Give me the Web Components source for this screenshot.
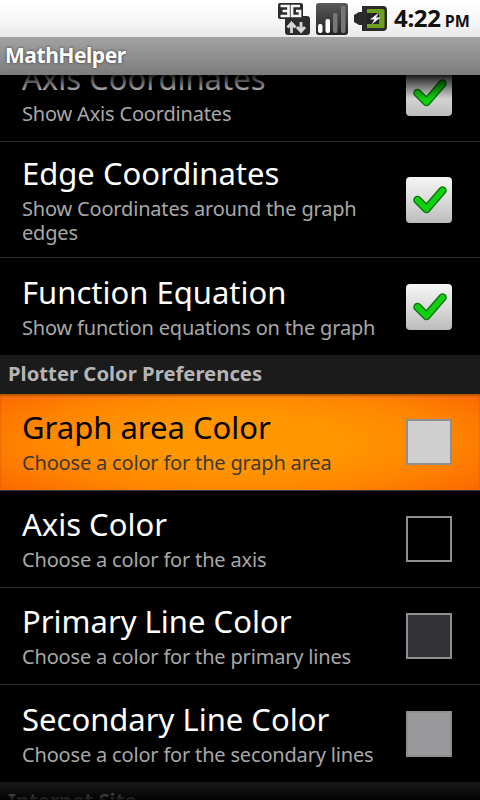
<!DOCTYPE html>
<html><head><meta charset="utf-8"><style>
html,body{margin:0;padding:0;background:#000;}
body{width:480px;height:800px;overflow:hidden;font-family:"Noto Sans","Open Sans",sans-serif;}
</style></head><body>
<phone-app>
<status-bar slot="status"></status-bar>
<title-bar slot="title">MathHelper</title-bar>
<pref-list slot="list">
<pref-row title="Axis Coordinates" sub="Show Axis Coordinates" check></pref-row>
<pref-row title="Edge Coordinates" sub="Show Coordinates around the graph edges" check tall></pref-row>
<pref-row title="Function Equation" sub="Show function equations on the graph" check last></pref-row>
<pref-section>Plotter Color Preferences</pref-section>
<pref-row title="Graph area Color" sub="Choose a color for the graph area" swatch="#cfcfcf" selected></pref-row>
<pref-row title="Axis Color" sub="Choose a color for the axis" swatch="#000"></pref-row>
<pref-row title="Primary Line Color" sub="Choose a color for the primary lines" swatch="#333236"></pref-row>
<pref-row title="Secondary Line Color" sub="Choose a color for the secondary lines" swatch="#99999b" last></pref-row>
<pref-section>Internet Site</pref-section>
</pref-list>
</phone-app>
<script>
function def(name,css,html,init){
  customElements.define(name,class extends HTMLElement{
    constructor(){super();const r=this.attachShadow({mode:"open"});r.innerHTML="<style>"+css+"</style>"+html;}
    connectedCallback(){if(init)init(this,this.shadowRoot);}
  });
}
def("phone-app",`:host{display:flex;flex-direction:column;width:480px;height:800px;overflow:hidden}
`,`<slot name="status"></slot><slot name="title"></slot><slot name="list"></slot>`);

def("status-bar",`:host{display:flex;align-items:center;height:37px;box-sizing:border-box;
background:linear-gradient(#fff 0,#f6f6f6 60%,#e8e8e8 100%);color:#111;padding-left:278px;flex:none}
svg{display:block;flex:none}
.s{margin-left:6px}.b{margin-left:6px}
.time{font:700 24px/30px "Noto Sans","Open Sans",sans-serif;letter-spacing:-.3px;margin-left:7px;margin-top:2px;white-space:nowrap}
.time small{font-size:16px;font-weight:700;margin-left:4px;letter-spacing:.2px}
`,`<svg class="n" width="32" height="32" viewBox="0 0 32 32">
<rect x="7" y="13" width="25" height="19" rx="3" fill="#2c2c2c"/>
<rect x="0" y="0" width="25" height="16" rx="2" fill="#2c2c2c"/>
<path d="M2.500 3h8v10h-8M4.500 8h6M22 3h-8v10h8V8h-4" fill="none" stroke="#f6f6f6" stroke-width="2.700"/>
<path d="M13.500 30v-9M9.500 24.500l4-4.500 4 4.500" fill="none" stroke="#d6d6d6" stroke-width="2.800"/>
<path d="M23 19v9M19 24l4 4.500 4-4.500" fill="none" stroke="#d6d6d6" stroke-width="2.800"/>
</svg>
<svg class="s" width="32" height="32" viewBox="0 0 32 32">
<defs><linearGradient id="sg" x1="0" y1="0" x2="0" y2="1"><stop offset="0" stop-color="#5a5a5a"/><stop offset="1" stop-color="#222"/></linearGradient></defs>
<rect width="32" height="32" rx="3" fill="url(#sg)"/>
<rect x="2" y="21" width="4.500" height="9" rx="2" fill="#fff"/>
<rect x="9.500" y="16" width="4.500" height="14" rx="2" fill="#fff"/>
<rect x="17" y="10" width="4.500" height="20" rx="2" fill="#777"/>
<rect x="25" y="3" width="4.500" height="27" rx="2" fill="#777"/>
</svg>
<svg class="b" width="33" height="25" viewBox="0 0 33 25">
<path d="M0 9l5-3h3V0h21a4 4 0 0 1 4 4v17a4 4 0 0 1-4 4H8v-6H5l-5-3z" fill="#2a2a2a"/>
<path d="M13 3h16a1.500 1.500 0 0 1 1.500 1.500v16a1.500 1.500 0 0 1-1.500 1.500H13z" fill="#6ea020"/>
<path d="M13 7h12v11H13z" fill="#222"/>
<path d="M25 6.500l-9 7h4.500l-3 5 9-7h-4.500z" fill="#fff"/>
</svg>
<span class="time">4:22<small>PM</small></span>`);

def("title-bar",`:host{display:block;height:38px;box-sizing:border-box;flex:none;background:linear-gradient(#a3a3a3,#7c7c7c);
color:#fff;font:700 21px/37px "Noto Sans","Open Sans",sans-serif;letter-spacing:-.45px;padding-left:5px;text-shadow:0 0 3px #333;position:relative;z-index:2}`,`<slot></slot>`);

def("pref-list",`:host{display:block;flex:1;min-height:0;overflow:hidden;position:relative;background:#000}
.in{margin-top:-30px}
.f{position:absolute;left:0;right:0;pointer-events:none}
.t{top:0;height:24px;background:linear-gradient(rgba(0,0,0,.9),rgba(0,0,0,0))}
.bt{bottom:0;height:20px;background:linear-gradient(rgba(0,0,0,0),rgba(0,0,0,.9))}
`,`<div class="in"><slot></slot></div><div class="f t"></div><div class="f bt"></div>`);

def("pref-section",`:host{display:block;height:39px;box-sizing:border-box;background:#1b1b1b;color:#b5b5b5;
font:700 20.300px/37px "Noto Sans","Open Sans",sans-serif;padding-left:8px;white-space:nowrap;overflow:hidden}`,`<slot></slot>`);

def("pref-row",`:host{display:flex;align-items:center;box-sizing:border-box;height:97px;padding:0 28px 0 22px;border-bottom:1px solid #2b2b2b;background:#000;gap:12px}
:host([tall]){height:116px}
:host([last]){border-bottom:0}
:host([selected]){background:radial-gradient(ellipse 62% 75% at 50% 50%,#ff9600 35%,#ff8500 70%,#fb6c00 100%);border-bottom:1px solid #3a3a3a;box-shadow:inset 0 2px 2px #b85a00}
.tx{flex:1;min-width:0;margin-top:-2px}
.h{font-size:31px;line-height:40px;color:#fff;white-space:nowrap}
.p{font-size:20px;letter-spacing:-.18px;line-height:24px;color:#a8a8a8;margin-top:4px}
:host([selected]) .h{color:#000}
:host([selected]) .p{color:#3e3a36}
.box{flex:none;width:46px;height:46px;box-sizing:border-box}
.sw{border:2px solid #8e8e8e}
.ck{border-radius:4px;background:linear-gradient(#f6f6f6,#dedede 45%,#bcbcbc)}
.ck svg{display:block}
`,`<div class="tx"><div class="h"></div><div class="p"></div></div><div class="box"></div>`,
(el,r)=>{
  r.querySelector(".h").textContent=el.getAttribute("title");
  r.querySelector(".p").textContent=el.getAttribute("sub");
  const b=r.querySelector(".box");
  if(el.hasAttribute("check")){
    b.classList.add("ck");
    b.innerHTML='<svg width="46" height="46" viewBox="0 0 46 46"><path d="M11.500 23L20.500 32L36.500 13.500" fill="none" stroke="#0b7a0b" stroke-width="8.500" stroke-linecap="round" stroke-linejoin="round"/><path d="M11.500 23L20.500 32L36.500 13.500" fill="none" stroke="#10d010" stroke-width="5.500" stroke-linecap="round" stroke-linejoin="round"/></svg>';
  } else {
    b.classList.add("sw");
    b.style.background=el.getAttribute("swatch");
  }
});
</script>
</body></html>
